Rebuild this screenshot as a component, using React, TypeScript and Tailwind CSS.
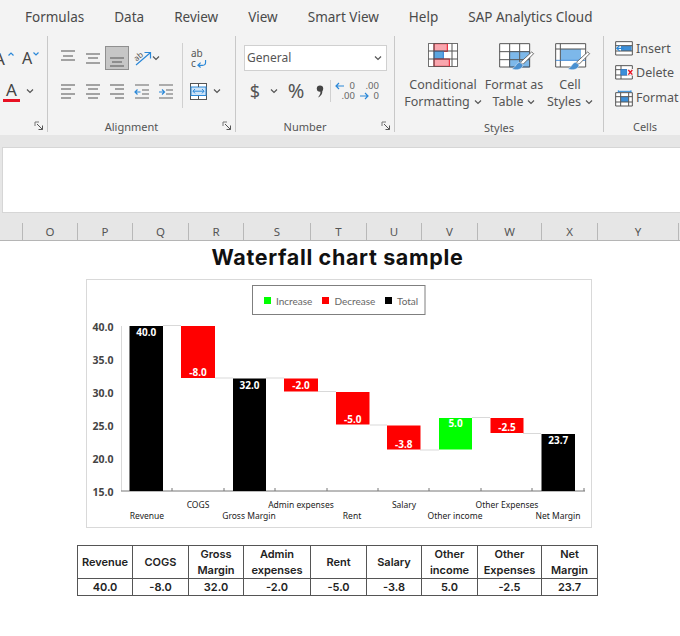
import React from "react";

const B = "#2b88d8";

function Chev({ className = "" }: { className?: string }) {
  return (
    <svg width="8" height="6" viewBox="0 0 8 6" className={className}>
      <path d="M1 1.5 L4 4.5 L7 1.5" fill="none" stroke="#555" strokeWidth="1.2" />
    </svg>
  );
}

function Lines({ rows, w = 18 }: { rows: [number, number, number?][]; w?: number }) {
  return (
    <svg width={w} height="20" viewBox={`0 0 ${w} 20`}>
      {rows.map(([y, x1, x2], i) => (
        <line key={i} x1={x1} x2={x2 ?? w - 1} y1={y} y2={y} stroke="#5f5f5f" strokeWidth="1.1" />
      ))}
    </svg>
  );
}

function Slot({ children, w = "w-[25px]", className = "" }: { children?: React.ReactNode; w?: string; className?: string }) {
  return <div className={`${w} h-[24px] flex items-center justify-center shrink-0 ${className}`}>{children}</div>;
}

function Launcher() {
  return (
    <svg width="10" height="10" viewBox="0 0 10 10">
      <path d="M1 5 V1 H5" fill="none" stroke="#777" strokeWidth="1" />
      <path d="M3 3 L8.5 8.5 M8.5 4.5 V8.5 H4.5" fill="none" stroke="#555" strokeWidth="1" />
    </svg>
  );
}

function GroupLabel({ children, launcher, className = "" }: { children?: React.ReactNode; launcher?: boolean; className?: string }) {
  return (
    <div className={`mt-auto h-[16px] mb-[-3px] relative flex items-center justify-center text-[11px] text-[#555] ${className}`}>
      <span>{children}</span>
      {launcher && (
        <span className="absolute right-[3px] top-[2px] flex">
          <Launcher />
        </span>
      )}
    </div>
  );
}

function gridLines(xs: number[], ys: number[], stroke = "#555") {
  return (
    <g stroke={stroke} strokeWidth="3" fill="none">
      {xs.map((x) => (
        <line key={"x" + x} x1={x} x2={x} y1={ys[0]} y2={ys[ys.length - 1]} />
      ))}
      {ys.map((y) => (
        <line key={"y" + y} y1={y} y2={y} x1={xs[0]} x2={xs[xs.length - 1]} />
      ))}
    </g>
  );
}

function Brush() {
  return (
    <g>
      <path d="M98 27 L104 32 L72 64 L64 58 Z" fill="#fff" stroke="#555" strokeWidth="2.5" />
      <path d="M62 58 C50 60 52 72 38 78 C54 84 72 78 72 65 Z" fill="#4a90d0" stroke="#fff" strokeWidth="1.5" />
    </g>
  );
}

function CFIcon() {
  return (
    <svg width="30" height="24" viewBox="0 0 90 72">
      <rect x="2" y="2" width="86" height="68" fill="#fff" />
      <rect x="18" y="2" width="40" height="23" fill="#f9a6ae" stroke="#e81123" strokeWidth="3" />
      <rect x="18" y="25" width="28" height="23" fill="#5aa5e0" stroke="#2b7cd3" strokeWidth="3" />
      <rect x="18" y="48" width="46" height="22" fill="#f9a6ae" stroke="#e81123" strokeWidth="3" />
      {gridLines([1, 72, 89], [1, 24, 48, 71])}
      <line x1="18" x2="18" y1="1" y2="71" stroke="#555" strokeWidth="3" />
    </svg>
  );
}

function FTIcon() {
  return (
    <svg width="36" height="30" viewBox="0 0 108 90">
      <rect x="2" y="2" width="90" height="70" fill="#fff" />
      <rect x="32" y="26" width="60" height="46" fill="#7db8ea" stroke="#2b7cd3" strokeWidth="2" />
      {gridLines([2, 32, 62, 92], [2, 26, 50, 72])}
      <Brush />
    </svg>
  );
}

function CSIcon() {
  return (
    <svg width="36" height="30" viewBox="0 0 108 90">
      <rect x="2" y="2" width="90" height="70" fill="#fff" />
      <rect x="16" y="18" width="62" height="34" fill="#7db8ea" />
      {gridLines([2, 92], [2, 18, 72])}
      <line x1="16" x2="16" y1="2" y2="72" stroke="#555" strokeWidth="3" />
      <line x1="2" x2="92" y1="52" y2="52" stroke="#2b7cd3" strokeWidth="2.5" />
      <Brush />
    </svg>
  );
}

function CellIcon({ kind }: { kind: "insert" | "delete" | "format" }) {
  return (
    <svg width="19" height="17" viewBox="0 0 57 51">
      {kind === "format" ? (
        <>
          <rect x="2" y="8" width="50" height="40" fill="#fff" />
          <rect x="17" y="20" width="24" height="16" fill="#3d8fd8" />
          {gridLines([2, 17, 41, 52], [8, 20, 36, 48])}
          <path d="M10 1 V7 M48 1 V7 M10 4 H48" stroke={B} strokeWidth="3" fill="none" />
        </>
      ) : kind === "insert" ? (
        <>
          <rect x="2" y="2" width="50" height="40" fill="#fff" />
          <rect x="18" y="14" width="32" height="16" fill="#3d8fd8" />
          {gridLines([2, 52], [2, 14, 30, 42])}
          <path d="M26 22 H6 M14 14 L5 22 L14 30" stroke={B} strokeWidth="3.5" fill="#fff" />
        </>
      ) : (
        <>
          <rect x="2" y="2" width="50" height="40" fill="#fff" />
          {gridLines([2, 18, 52], [2, 14, 30, 42])}
          <rect x="18" y="14" width="18" height="16" fill="#3d8fd8" stroke="#2b7cd3" strokeWidth="2" />
          <rect x="36" y="12" width="20" height="20" fill="#f3f3f3" />
          <path d="M40 15 L52 29 M52 15 L40 29" stroke="#e81123" strokeWidth="4" />
        </>
      )}
    </svg>
  );
}

const HEAD: [string, number][] = [
  ["", 23], ["O", 55], ["P", 55], ["Q", 56], ["R", 55], ["S", 67], ["T", 56], ["U", 55], ["V", 56], ["W", 64], ["X", 56], ["Y", 81], ["", 2],
];

const BARS = [
  { x: 129.5, w: 33.5, t: 326, b: 491, c: "#000", l: "40.0", ly: 335.5 },
  { x: 181, w: 34, t: 326, b: 378, c: "#ff0000", l: "-8.0", ly: 376 },
  { x: 233, w: 33, t: 378.5, b: 491, c: "#000", l: "32.0", ly: 389 },
  { x: 284, w: 34, t: 378.5, b: 391.5, c: "#ff0000", l: "-2.0", ly: 389 },
  { x: 336, w: 33.5, t: 392, b: 424.5, c: "#ff0000", l: "-5.0", ly: 422.5 },
  { x: 387, w: 33.5, t: 425.5, b: 449.5, c: "#ff0000", l: "-3.8", ly: 447.5 },
  { x: 439, w: 33, t: 418, b: 449.5, c: "#00ff00", l: "5.0", ly: 427 },
  { x: 490.5, w: 33, t: 418, b: 433, c: "#ff0000", l: "-2.5", ly: 431 },
  { x: 541.5, w: 33.5, t: 434, b: 491, c: "#000", l: "23.7", ly: 444 },
];

const CATS: [string, number, number][] = [
  ["COGS", 198, 507.5], ["Admin expenses", 301, 507.5], ["Salary", 404, 507.5], ["Other Expenses", 507, 507.5],
  ["Revenue", 147, 518.5], ["Gross Margin", 249, 518.5], ["Rent", 352, 518.5], ["Other income", 455, 518.5], ["Net Margin", 558, 518.5],
];

const TABLE: [string, string, number][] = [
  ["Revenue", "40.0", 55], ["COGS", "-8.0", 56], ["Gross Margin", "32.0", 55], ["Admin expenses", "-2.0", 67],
  ["Rent", "-5.0", 56], ["Salary", "-3.8", 55], ["Other income", "5.0", 56], ["Other Expenses", "-2.5", 64], ["Net Margin", "23.7", 56],
];

function WaterfallChart() {
  return (
    <svg width="506" height="249" viewBox="86 279 506 249" className="block">
      <rect x="86.5" y="279.5" width="505" height="248" fill="#fff" stroke="#d9d9d9" />
      <rect x="252.5" y="285.5" width="172.5" height="29" fill="#fff" stroke="#7f7f7f" strokeWidth="1" />
      {([["#00ff00", "Increase", 264, 276], ["#ff0000", "Decrease", 322, 334.5], ["#000", "Total", 385, 397]] as [string, string, number, number][]).map(([c, t, x, tx]) => (
        <g key={t}>
          <rect x={x} y="297" width="7" height="7" fill={c} />
          <text x={tx} y="304.5" fontSize="10" fill="#666" fontFamily="Lato, sans-serif">{t}</text>
        </g>
      ))}
      {[40, 35, 30, 25, 20, 15].map((v, i) => (
        <text key={v} x="113.5" y={331 + i * 33} textAnchor="end" fontSize="10.5" fontWeight="700" fill="#444" fontFamily="'Open Sans', sans-serif">
          {v.toFixed(1)}
        </text>
      ))}
      <line x1="121.5" x2="121.5" y1="326" y2="491" stroke="#d9d9d9" />
      <line x1="121" x2="585" y1="491" y2="491" stroke="#777" />
      {[172, 224, 275, 327, 378, 429, 481, 532, 584].map((x) => (
        <line key={x} x1={x} x2={x} y1="488" y2="491" stroke="#777" />
      ))}
      {[[163, 181, 325.5], [215, 233, 378], [266, 284, 378], [318, 336, 391.5], [370, 387, 425], [420, 439, 450], [472, 490, 417.5], [523, 541, 433.5]].map(([a, b, y]) => (
        <line key={a} x1={a} x2={b} y1={y} y2={y} stroke="#d9d9d9" />
      ))}
      {BARS.map((b) => (
        <g key={b.l}>
          <rect x={b.x} y={b.t} width={b.w} height={b.b - b.t} fill={b.c} />
          <text x={b.x + b.w / 2} y={b.ly} textAnchor="middle" fontSize="10" fontWeight="700" fill="#fff" fontFamily="'Noto Sans', sans-serif">
            {b.l}
          </text>
        </g>
      ))}
      {CATS.map(([t, x, y]) => (
        <text key={t} x={x} y={y} textAnchor="middle" fontSize="8.5" fill="#222" fontFamily="'Noto Sans', sans-serif">
          {t}
        </text>
      ))}
    </svg>
  );
}

export default function App() {
  return (
    <div className="w-[680px] h-[636px] overflow-hidden bg-white text-[#444]" style={{ fontFamily: "'Noto Sans', sans-serif" }}>
      {/* Tabs */}
      <div className="h-[35px] bg-[#f3f3f3] flex items-center pl-[25px] gap-[30px] text-[13.5px] text-[#4a4a4a] whitespace-nowrap">
        {["Formulas", "Data", "Review", "View", "Smart View", "Help", "SAP Analytics Cloud"].map((t) => (
          <span key={t}>{t}</span>
        ))}
      </div>

      {/* Ribbon */}
      <div className="h-[100px] bg-[#f3f3f3] flex items-start overflow-hidden">
        {/* Font (cut off) */}
        <div className="w-[48px] h-[96px] mt-[1px] border-r border-[#c8c8c8] flex flex-col shrink-0 relative overflow-visible">
          <div className="flex items-center h-[24px] mt-[10px] ml-[-6px] gap-[3px]">
            <span className="text-[17px] leading-none">A</span>
            <svg width="6" height="4" viewBox="0 0 6 4" className="mb-[8px]"><path d="M0.5 3.5 L3 1 L5.5 3.5" fill="none" stroke={B} strokeWidth="1.2" /></svg>
            <span className="text-[16px] leading-none ml-[5px]">A</span>
            <svg width="6" height="4" viewBox="0 0 6 4" className="mb-[8px] ml-[-2px]"><path d="M0.5 0.5 L3 3 L5.5 0.5" fill="none" stroke={B} strokeWidth="1.2" /></svg>
          </div>
          <div className="flex items-center h-[24px] mt-[9px] ml-[3px]">
            <div className="w-[17px] flex flex-col items-center">
              <span className="text-[17px] leading-[18px]">A</span>
              <div className="w-[17px] h-[3px] bg-[#e81123]" />
            </div>
            <Chev className="ml-[6px]" />
          </div>
          <GroupLabel launcher />
        </div>

        {/* Alignment */}
        <div className="w-[188px] h-[96px] mt-[1px] border-r border-[#c8c8c8] flex flex-col shrink-0">
          <div className="flex mt-[10px] pl-[7px] h-[24px] items-center">
            <Slot><Lines w={16} rows={[[3, 1], [8, 3, 13], [12, 1]]} /></Slot>
            <Slot><Lines w={16} rows={[[6, 1], [10, 3, 13], [15, 1]]} /></Slot>
            <Slot w="w-[24px]" className="bg-[#c6c6c6] border border-[#8f8f8f]"><Lines w={16} rows={[[10, 1], [14, 3, 13], [18, 1]]} /></Slot>
            <Slot w="w-[26px]">
              <svg width="20" height="20" viewBox="0 0 20 20">
                <text x="2" y="11" fontSize="8" fill="#555" transform="rotate(-40 7 9)" fontFamily="'Noto Sans', sans-serif">ab</text>
                <path d="M4 17 L18 5 M12.5 4.5 H18.5 V10.5" fill="none" stroke={B} strokeWidth="1.2" />
              </svg>
            </Slot>
            <Chev className="ml-[-3px]" />
            <div className="w-px h-[65px] bg-[#d0d0d0] ml-[22px] self-start mt-[-3px]" />
            <Slot w="w-[32px]">
              <div className="w-[16px] text-[10px] leading-[10px] text-[#555]">
                <span className="block">ab</span>
                <div className="flex items-center">
                  <span className="block">c</span>
                  <svg width="11" height="9" viewBox="0 0 12 10" className="shrink-0">
                    <path d="M10.5 1 V4 Q10.5 7 7 7 H2 M5 4 L2 7 L5 9.5" fill="none" stroke={B} strokeWidth="1.3" />
                  </svg>
                </div>
              </div>
            </Slot>
          </div>
          <div className="flex mt-[9px] pl-[7px] h-[24px] items-center">
            <Slot><Lines w={16} rows={[[4, 1], [8, 1, 11], [13, 1], [17, 1, 11]]} /></Slot>
            <Slot><Lines w={16} rows={[[4, 1], [8, 3, 13], [13, 1], [17, 3, 13]]} /></Slot>
            <Slot w="w-[24px]"><Lines w={16} rows={[[4, 1], [8, 6], [13, 1], [17, 6]]} /></Slot>
            <Slot w="w-[25px]">
              <svg width="16" height="20" viewBox="0 0 16 20">
                <path d="M1 4 H15 M8 9 H15 M8 13 H15 M1 17 H15" stroke="#666" strokeWidth="1.1" />
                <path d="M6.5 11 H1 M3.5 8.5 L1 11 L3.5 13.5" stroke={B} strokeWidth="1.2" fill="none" />
              </svg>
            </Slot>
            <Slot w="w-[24px]">
              <svg width="16" height="20" viewBox="0 0 16 20">
                <path d="M1 4 H15 M8 9 H15 M8 13 H15 M1 17 H15" stroke="#666" strokeWidth="1.1" />
                <path d="M1 11 H6.5 M4 8.5 L6.5 11 L4 13.5" stroke={B} strokeWidth="1.2" fill="none" />
              </svg>
            </Slot>
            <Slot w="w-[32px]" className="ml-[4px]">
              <svg width="17" height="17" viewBox="0 0 17 17">
                <rect x="0.5" y="0.5" width="16" height="16" fill="#fff" stroke="#555" />
                <rect x="1" y="4" width="15" height="8.5" fill="#cfe4f7" stroke={B} />
                <path d="M3 8.2 H14 M5 6 L3 8.2 L5 10.4 M12 6 L14 8.2 L12 10.4" stroke={B} fill="none" />
                <line x1="8.5" x2="8.5" y1="0" y2="4" stroke="#555" />
                <line x1="8.5" x2="8.5" y1="13" y2="17" stroke="#555" />
              </svg>
            </Slot>
            <Chev className="ml-[-1px]" />
          </div>
          <GroupLabel launcher className="pr-[20px]">Alignment</GroupLabel>
        </div>

        {/* Number */}
        <div className="w-[159px] h-[96px] mt-[1px] border-r border-[#c8c8c8] flex flex-col shrink-0">
          <div className="mt-[9px] ml-[8px] w-[143px] h-[26px] bg-white border border-[#d0d0d0] flex items-center justify-between pl-[2px] pr-[4px] text-[12px] text-[#555]">
            <span>General</span>
            <Chev />
          </div>
          <div className="flex mt-[8px] h-[24px] items-center pl-[11px]">
            <span className="w-[16px] text-center text-[18px] leading-none text-[#555]">$</span>
            <Chev className="ml-[7px]" />
            <span className="ml-[7px] w-[22px] text-center text-[20px] leading-none text-[#555]">%</span>
            <svg width="8" height="13" viewBox="0 0 8 13" className="ml-[9px] shrink-0">
              <circle cx="4" cy="3.6" r="3.2" fill="#444" />
              <path d="M5 3 C7.5 6 6.5 10.5 2 12.5 C4.5 9.5 5 7 4 5 Z" fill="#444" />
            </svg>
            <div className="w-px h-[22px] bg-[#d0d0d0] ml-[6px]" />
            <Slot w="w-[24px]" className="ml-[2px]">
              <div className="w-[20px] text-[#666] text-[9.5px] leading-[10px] text-right">
                <div className="flex items-center justify-between">
                  <svg width="10" height="8" viewBox="0 0 10 8"><path d="M9 4 H1 M4 1 L1 4 L4 7" fill="none" stroke={B} strokeWidth="1.2" /></svg>
                  <span>0</span>
                </div>
                <div>.00</div>
              </div>
            </Slot>
            <Slot w="w-[24px]">
              <div className="w-[20px] text-[#666] text-[9.5px] leading-[10px] text-right">
                <div>.00</div>
                <div className="flex items-center justify-between">
                  <svg width="10" height="8" viewBox="0 0 10 8"><path d="M1 4 H9 M6 1 L9 4 L6 7" fill="none" stroke={B} strokeWidth="1.2" /></svg>
                  <span>0</span>
                </div>
              </div>
            </Slot>
          </div>
          <GroupLabel launcher className="pr-[20px]">Number</GroupLabel>
        </div>

        {/* Styles */}
        <div className="w-[209px] h-[96px] mt-[1px] border-r border-[#c8c8c8] flex flex-col shrink-0 text-[12.5px] leading-[17px] text-[#555]">
          <div className="flex pl-[10px]">
            <div className="w-[76px] flex flex-col items-center mt-[7px]">
              <div className="h-[30px] flex items-start"><CFIcon /></div>
              <div className="mt-[3px] text-center">Conditional</div>
              <div className="flex items-center gap-[4px] whitespace-nowrap">Formatting<Chev /></div>
            </div>
            <div className="w-[60px] flex flex-col items-center mt-[7px] ml-[3px]">
              <div className="h-[30px] flex items-start ml-[6px]"><FTIcon /></div>
              <div className="mt-[3px] text-center whitespace-nowrap">Format as</div>
              <div className="flex items-center gap-[4px]">Table<Chev /></div>
            </div>
            <div className="w-[44px] flex flex-col items-center mt-[7px] ml-[4px]">
              <div className="h-[30px] flex items-start ml-[6px]"><CSIcon /></div>
              <div className="mt-[3px] text-center">Cell</div>
              <div className="flex items-center gap-[4px] whitespace-nowrap">Styles<Chev /></div>
            </div>
          </div>
          <GroupLabel>Styles</GroupLabel>
        </div>

        {/* Cells */}
        <div className="flex-1 h-[96px] mt-[1px] flex flex-col text-[12.5px] text-[#555]">
          <div className="flex flex-col pl-[11px] pt-[1px] gap-[4.5px] mt-[1px]">
            {([["Insert", "insert"], ["Delete", "delete"], ["Format", "format"]] as [string, "insert" | "delete" | "format"][]).map(([t, k]) => (
              <div key={t} className="h-[18px] flex items-center gap-[2px] mt-[2px]">
                <CellIcon kind={k} />
                <span className="whitespace-nowrap">{t}</span>
              </div>
            ))}
          </div>
          <GroupLabel className="pl-[6px]">Cells</GroupLabel>
        </div>
      </div>

      {/* Formula band */}
      <div className="bg-[#e6e6e6] pt-[12px]">
        <div className="ml-[2px] h-[66px] bg-white border border-[#d6d6d6] border-r-0" />
        <div className="h-[28px] flex items-end border-b border-[#b5b5b5] text-[11.5px] text-[#555]">
          {HEAD.map(([t, w], i) => (
            <div key={i} className="h-[17px] flex items-center justify-center border-r border-[#b8b8b8] shrink-0" style={{ width: w }}>
              {t}
            </div>
          ))}
        </div>
      </div>

      {/* Sheet */}
      <div className="h-[38px] pb-[6px] flex items-center justify-center text-[21.5px] font-bold text-[#111] tracking-[0.65px] w-[675px]" style={{ fontFamily: "Inter, sans-serif" }}>
        Waterfall chart sample
      </div>
      <div className="ml-[86px]">
        <WaterfallChart />
      </div>
      <div className="ml-[77px] mt-[17px] flex text-[#222] text-[11px] font-semibold text-center leading-[16px]" style={{ fontFamily: "Inter, sans-serif" }}>
        {TABLE.map(([h, v, w], i) => (
          <div key={h} className={`border-y border-[#555] border-r ${i === 0 ? "border-l" : ""} shrink-0`} style={{ width: w + (i === 0 ? 1 : 0) }}>
            <div className="h-[33px] flex items-center justify-center border-b border-[#555] px-[1px]">{h}</div>
            <div className="h-[16px] flex items-center justify-center">{v}</div>
          </div>
        ))}
      </div>
    </div>
  );
}
